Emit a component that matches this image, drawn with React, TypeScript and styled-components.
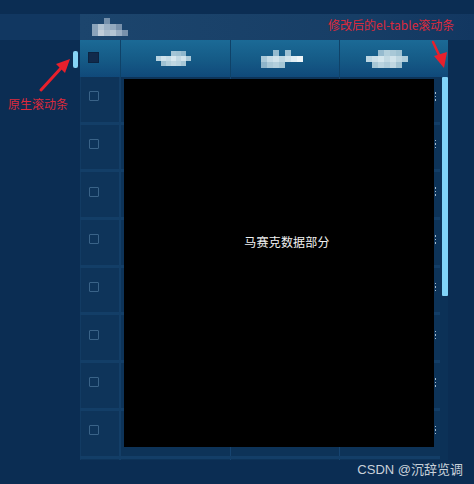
import styled, { createGlobalStyle } from "styled-components";

const GlobalStyle = createGlobalStyle`
  html, body {
    margin: 0;
    padding: 0;
    background: #0b2d53;
  }
  body {
    font-family: "Noto Sans CJK SC", "Noto Sans", sans-serif;
  }
`;

const ROW_COUNT = 9;
const COLS = "41px 110px 109px 100px";

const Page = styled.div`
  position: relative;
  width: 474px;
  height: 484px;
  overflow: hidden;
  background: #0b2d53;
`;

const TopBar = styled.div`
  display: flex;
  height: 26px;
  margin-top: 14px;
`;

const TopLeft = styled.div`
  width: 80px;
  background: #113761;
`;

const TopPanel = styled.div`
  flex: 1;
  display: flex;
  align-items: center;
  padding-left: 12px;
  background: linear-gradient(90deg, #1c456d 0%, #173e66 70%, #123761 100%);
`;

const Main = styled.div`
  display: flex;
`;

const Gutter = styled.div`
  width: 80px;
  display: flex;
  justify-content: flex-end;
  padding-top: 11px;
  padding-right: 2px;
  box-sizing: border-box;
`;

const NativeThumb = styled.div`
  width: 5px;
  height: 17px;
  border-radius: 2px;
  background: #86d4f6;
`;

const Table = styled.div`
  width: 368px;
  display: flex;
  flex-direction: column;
`;

const HeaderRow = styled.div`
  display: grid;
  grid-template-columns: ${COLS} 8px;
  height: 37px;
  background: linear-gradient(180deg, #1b6a96 0%, #155a86 55%, #10497a 100%);
`;

const HeaderCell = styled.div<{ $last?: boolean }>`
  display: flex;
  align-items: center;
  justify-content: center;
  border-right: ${(p) => (p.$last ? "none" : "1px solid #0f4268")};
`;

const HeaderCheck = styled.div`
  width: 11px;
  height: 11px;
  background: #112a4b;
  border: 1px solid #0c2340;
  box-sizing: border-box;
  margin-left: -14px;
  margin-top: -2px;
`;

const Body = styled.div`
  position: relative;
  display: flex;
  height: 383px;
  overflow: hidden;
`;

const Rows = styled.div`
  width: 360px;
  display: flex;
  flex-direction: column;
`;

const Row = styled.div`
  display: grid;
  grid-template-columns: ${COLS};
  flex: 0 0 47.7px;
  box-sizing: border-box;
  border-bottom: 3px solid #133e67;
`;

const CheckCell = styled.div`
  display: flex;
  align-items: center;
  justify-content: center;
  background: #0e345a;
  border-left: 1px solid #123b63;
  border-right: 2px solid #133e67;
  padding-right: 12px;
  padding-bottom: 6px;
`;

const CheckBox = styled.div`
  width: 10px;
  height: 10px;
  border: 1px solid #3a6388;
  border-radius: 1px;
  box-sizing: border-box;
`;

const DataCell = styled.div<{ $last?: boolean }>`
  display: flex;
  align-items: center;
  justify-content: flex-end;
  padding-right: 4px;
  padding-bottom: 6px;
  background: #0d3358;
  border-right: ${(p) => (p.$last ? "none" : "1px solid #164470")};
`;

const Dots = styled.div`
  display: flex;
  flex-direction: column;
  gap: 2px;

  span {
    width: 1.5px;
    height: 1.5px;
    background: #a9bccd;
  }
`;

const Track = styled.div`
  width: 8px;
  background: #0c3157;
`;

const Thumb = styled.div`
  width: 6px;
  height: 219px;
  margin-left: 2px;
  border-radius: 1px;
  background: #80d3f8;
`;

const MaskPanel = styled.div`
  position: absolute;
  left: 44px;
  top: 2px;
  width: 310px;
  height: 368px;
  box-sizing: border-box;
  padding-top: 155px;
  padding-left: 16px;
  background: #000;
  text-align: center;
  color: #f2f2f2;
  font-size: 12px;
  line-height: 16px;
  letter-spacing: 0.2px;
`;

const Mosaic = styled.div<{ $cols: number; $cell: number }>`
  display: grid;
  grid-template-columns: repeat(${(p) => p.$cols}, ${(p) => p.$cell}px);
  grid-auto-rows: ${(p) => p.$cell}px;
  filter: blur(0.7px);
`;

const Note = styled.div`
  position: absolute;
  color: #dc2a3c;
  font-size: 12px;
  line-height: 14px;
  white-space: nowrap;
`;

const Watermark = styled.div`
  position: absolute;
  right: 11px;
  bottom: 6px;
  color: #c9d1da;
  font-size: 13px;
  line-height: 16px;
  white-space: nowrap;
  font-family: "Liberation Sans", "Noto Sans CJK SC", sans-serif;
`;

const Overlay = styled.svg`
  position: absolute;
  left: 0;
  top: 0;
  pointer-events: none;
`;

function MosaicBlock({ cells, cols, cell }: { cells: string[]; cols: number; cell: number }) {
  return (
    <Mosaic $cols={cols} $cell={cell}>
      {cells.map((c, i) => (
        <div key={i} style={{ background: c }} />
      ))}
    </Mosaic>
  );
}

const T = "transparent";
const titleCells = [
  T, T, "#7590ab", T, T, T,
  "#8aa3ba", "#b2c3d2", "#9cb1c5", "#93a9be", "#7891ab", T,
  "#8aa3ba", "#c0cdd9", "#a8bbcc", "#b4c5d4", "#98adc2", "#7891ab",
];
const head1 = [
  T, T, T, "#a4c5d6", "#9fc1d2", "#8fb7cc", T, T,
  "#b8d3e0", "#cfe2eb", "#c4dbe6", "#d8e8ef", "#c2d9e4", "#d2e4ec", "#aac9d8", T,
  T, "#9fc1d2", "#b3cfdc", "#c0d7e2", "#b8d2df", "#a8c7d6", T, T,
];
const head2 = [
  T, T, "#94bbcf", T, "#9dc1d3", T, T, T,
  "#aac9d8", "#c4dbe6", "#d0e3eb", "#bed7e2", "#cfe2ea", "#e0edf3", "#eef5f8", T,
  "#8fb5ca", "#a9c8d7", "#b3cfdc", "#a5c6d5", T, T, T, T,
];
const head3 = [
  T, T, "#96bbcf", "#b2cfdc", "#a8c8d7", "#9dc1d2", T, T,
  "#bcd6e2", "#cbdfe8", "#d4e6ed", "#c2d9e3", "#d0e3eb", "#bdd6e1", "#aecddb", T,
  T, "#a6c6d5", "#b9d3df", "#aecbd9", "#c0d7e2", "#a1c2d2", T, T,
];

export default function App() {
  const rows = Array.from({ length: ROW_COUNT });
  return (
    <Page>
      <GlobalStyle />
      <TopBar>
        <TopLeft />
        <TopPanel>
          <MosaicBlock cells={titleCells} cols={6} cell={6} />
        </TopPanel>
      </TopBar>
      <Main>
        <Gutter>
          <NativeThumb />
        </Gutter>
        <Table>
          <HeaderRow>
            <HeaderCell>
              <HeaderCheck />
            </HeaderCell>
            <HeaderCell>
              <MosaicBlock cells={head1} cols={8} cell={5} />
            </HeaderCell>
            <HeaderCell>
              <MosaicBlock cells={head2} cols={8} cell={6} />
            </HeaderCell>
            <HeaderCell $last>
              <MosaicBlock cells={head3} cols={8} cell={6} />
            </HeaderCell>
            <HeaderCell $last />
          </HeaderRow>
          <Body>
            <Rows>
              {rows.map((_, i) => (
                <Row key={i}>
                  <CheckCell>
                    <CheckBox />
                  </CheckCell>
                  <DataCell />
                  <DataCell />
                  <DataCell $last>
                    <Dots>
                      <span />
                      <span />
                      <span />
                    </Dots>
                  </DataCell>
                </Row>
              ))}
            </Rows>
            <Track>
              <Thumb />
            </Track>
            <MaskPanel>马赛克数据部分</MaskPanel>
          </Body>
        </Table>
      </Main>

      <Note style={{ left: 328, top: 18 }}>修改后的el-table滚动条</Note>
      <Note style={{ left: 8, top: 97 }}>原生滚动条</Note>
      <Watermark>CSDN @沉辞览调</Watermark>

      <Overlay width={474} height={484} viewBox="0 0 474 484">
        <line x1={41} y1={90} x2={62} y2={67} stroke="#e8202c" strokeWidth={3} strokeLinecap="round" />
        <polygon points="70,59 56,64 65,73" fill="#e8202c" />
        <line x1={433} y1={42} x2={440} y2={57} stroke="#e8202c" strokeWidth={2.5} strokeLinecap="round" />
        <polygon points="444,68 434,56 447,52" fill="#e8202c" />
      </Overlay>
    </Page>
  );
}
